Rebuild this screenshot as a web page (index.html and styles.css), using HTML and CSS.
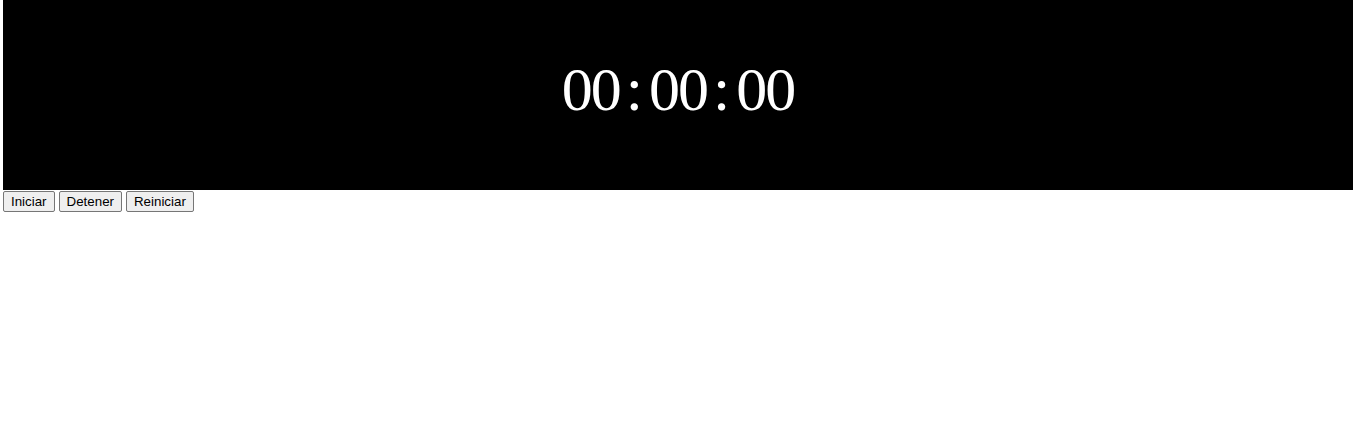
FILE: index.html
```html
<!DOCTYPE html>
<html lang="es">
<head>
<meta charset="utf-8">
<title>Cronómetro</title>
<link rel="stylesheet" href="styles.css">
</head>
<body>
<div class="display">
<span class="digits">00</span><span class="sep">:</span><span class="digits">00</span><span class="sep">:</span><span class="digits">00</span>
</div>
<div class="controls">
<button class="btn">Iniciar</button>
<button class="btn">Detener</button>
<button class="btn">Reiniciar</button>
</div>
</body>
</html>
```
FILE: styles.css
```css
body {
  margin: 0;
  padding: 0 2px 0 3px;
  background: #fff;
}
.display {
  box-sizing: border-box;
  height: 190px;
  padding-bottom: 12px;
  background: #000;
  color: #fff;
  display: flex;
  align-items: center;
  justify-content: center;
  gap: 6px;
  font-family: "Liberation Serif", "Times New Roman", serif;
  font-size: 62px;
  line-height: 1;
}
.digits {
  letter-spacing: -2px;
}
.controls {
  margin-top: 1px;
}
.btn {
  font-family: "Liberation Sans", Arial, sans-serif;
  font-size: 13.333px;
  margin: 0;
  padding: 2px 7px;
  background: #efefef;
  border: 1px solid #767676;
  border-radius: 2px;
  color: #000;
}
```
